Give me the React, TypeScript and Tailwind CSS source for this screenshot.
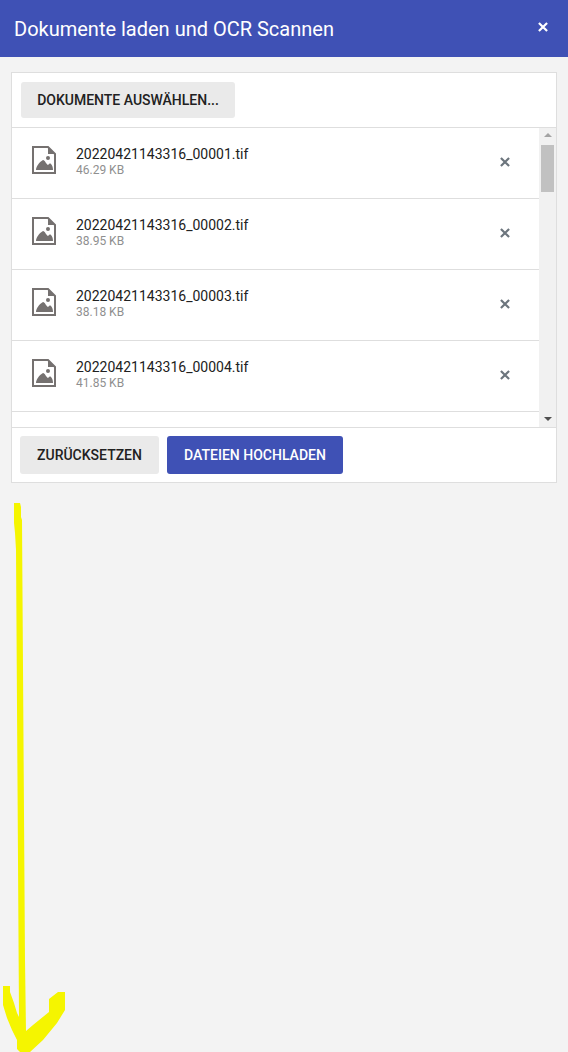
import React from 'react';

const files = [
  { name: '20220421143316_00001.tif', size: '46.29 KB' },
  { name: '20220421143316_00002.tif', size: '38.95 KB' },
  { name: '20220421143316_00003.tif', size: '38.18 KB' },
  { name: '20220421143316_00004.tif', size: '41.85 KB' },
];

const Times = ({ className }: { className: string }) => (
  <svg viewBox="0 0 11 11" className={className} fill="none" stroke="currentColor" strokeWidth="2.4">
    <path d="M1 1 L10 10 M10 1 L1 10" />
  </svg>
);

const FileImage = () => (
  <svg viewBox="0 0 24 28" className="w-6 h-7 -mt-[2px] text-[#757170]" fill="none">
    <path d="M1 1 H16 L23 8 V27 H1 Z" stroke="currentColor" strokeWidth="2" />
    <path d="M16 1 L23 8 H16 Z" fill="currentColor" />
    <path d="M4 24 C4 21 7 16 11 14 C13 14 14 18 16 19 C17 18 18 17 19 18 C20 19 21 21 21 24 Z" fill="currentColor" />
    <circle cx="16" cy="12" r="2" fill="currentColor" />
  </svg>
);

const App = () => {
  return (
    <div className="relative h-[1052px] overflow-hidden bg-[#f3f3f3] font-['Roboto',sans-serif]">
      <header className="h-[57px] bg-[#3f51b5] flex items-center justify-between pl-[14px] pr-5 text-white">
        <h1 className="text-xl font-normal">Dokumente laden und OCR Scannen</h1>
        <Times className="w-[10px] h-[10px] -mt-[3px]" />
      </header>

      <div className="mt-[15px] mx-[11px] bg-white border border-[#dedede]">
        <div className="h-[55px] pl-[9px] pt-[9px] border-b-[1px] border-[#dedede]">
          <button className="h-9 w-[214px] bg-[#eaeaea] rounded-[3px] text-sm font-medium text-[#212121]">
            DOKUMENTE AUSWÄHLEN...
          </button>
        </div>

        <div className="flex h-[300px] border-b border-[#dedede]">
          <ul className="flex-1 overflow-hidden">
            {files.map((file) => (
              <li key={file.name} className="h-[71px] flex items-center pl-5 pr-[29px] border-b border-[#dedede] pb-[4px]">
                <FileImage />
                <div className="ml-5 flex-1 leading-none">
                  <div className="text-sm leading-[17px] text-[#212121]">{file.name}</div>
                  <div className="text-xs leading-[14px] text-[#8f8f8f]">{file.size}</div>
                </div>
                <Times className="w-[10px] h-[10px] text-[#6c757d] mt-[2px]" />
              </li>
            ))}
          </ul>
          <div className="w-[17px] bg-[#f1f1f1] flex flex-col items-center">
            <div className="mt-[5px] w-0 h-0 border-x-[4px] border-x-transparent border-b-[4px] border-b-[#a3a3a3]" />
            <div className="mt-[8px] w-[13px] h-[47px] bg-[#c1c1c1]" />
            <div className="mt-auto mb-[6px] w-0 h-0 border-x-[4px] border-x-transparent border-t-[4px] border-t-[#505050]" />
          </div>
        </div>

        <div className="h-[54px] flex gap-2 pl-2 pt-2">
          <button className="h-[38px] w-[139px] bg-[#eaeaea] rounded-[3px] text-sm font-medium text-[#212121]">
            ZURÜCKSETZEN
          </button>
          <button className="h-[38px] w-[176px] bg-[#3f51b5] rounded-[3px] text-sm font-medium text-white">
            DATEIEN HOCHLADEN
          </button>
        </div>
      </div>

      {/* hand drawn arrow on top of the screenshot */}
      <svg className="absolute left-0 top-0 w-[568px] h-[1052px] pointer-events-none" viewBox="0 0 568 1052">
        <path
          fill="#f5f500"
          d="M14 503 H20 L21 507 V517 L22 520 L25 960 L26 1031 L33 1025 L49 1012 V999 L58 992 H65 V1010 L57 1023 L43 1040 L30 1052 H20 L17 1049 V1040 L12 1030 L7 1018 L3 1005 V986 H10 V992 L14 1003 L17 1013 L19 1017 L16 550 L15 533 L14 523 Z"
        />
      </svg>
    </div>
  );
};

export default App;
